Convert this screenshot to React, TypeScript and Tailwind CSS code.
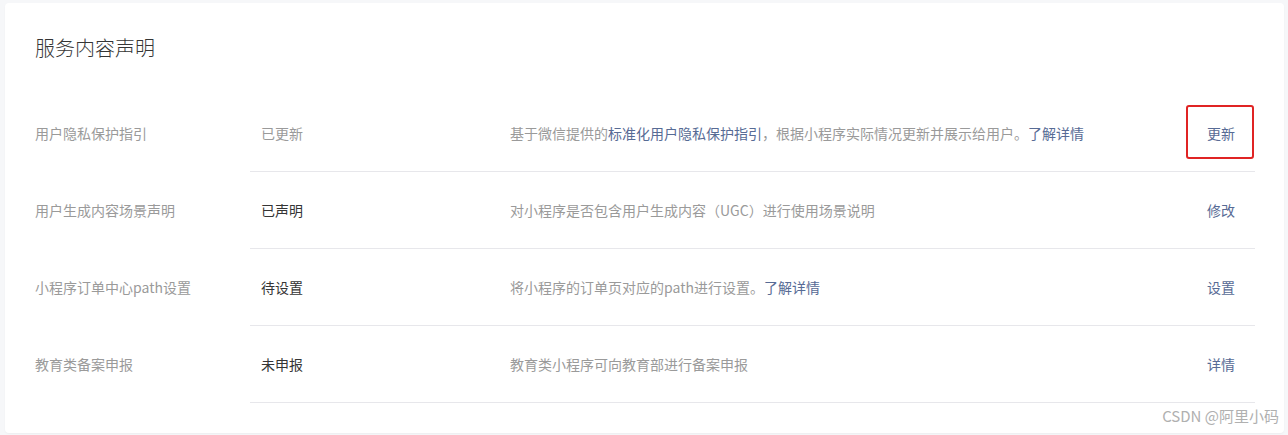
const font = { fontFamily: '"Noto Sans CJK SC", "Noto Sans", sans-serif' };

type Row = {
  label: string;
  status: string;
  muted?: boolean;
  desc: React.ReactNode;
  action: string;
  boxed?: boolean;
};

const rows: Row[] = [
  {
    label: "用户隐私保护指引",
    status: "已更新",
    muted: true,
    desc: (
      <>
        基于微信提供的<span className="text-[#576b95]">标准化用户隐私保护指引</span>
        ，根据小程序实际情况更新并展示给用户。
        <span className="text-[#576b95]">了解详情</span>
      </>
    ),
    action: "更新",
    boxed: true,
  },
  {
    label: "用户生成内容场景声明",
    status: "已声明",
    desc: "对小程序是否包含用户生成内容（UGC）进行使用场景说明",
    action: "修改",
  },
  {
    label: "小程序订单中心path设置",
    status: "待设置",
    desc: (
      <>
        将小程序的订单页对应的path进行设置。
        <span className="text-[#576b95]">了解详情</span>
      </>
    ),
    action: "设置",
  },
  {
    label: "教育类备案申报",
    status: "未申报",
    desc: "教育类小程序可向教育部进行备案申报",
    action: "详情",
  },
];

export default function App() {
  return (
    <div className="h-screen bg-[#f6f7f9] pl-[5px] pt-[3px] pr-[4px]" style={font}>
      <div className="relative h-[430px] rounded-[4px] bg-white pl-[30px] pr-[29px] shadow-[0_1px_2px_rgba(0,0,0,0.04)]">
        <div className="flex h-[92px] items-center pb-[2px] text-[20px] font-light text-[#353535]">
          服务内容声明
        </div>
        {rows.map((r) => (
          <div key={r.label} className="flex h-[77px] text-[14px]">
            <div className="flex w-[215px] items-center text-[#9a9a9a]">{r.label}</div>
            <div className="flex flex-1 items-center border-b border-[#e7e7eb]">
              <div
                className={`w-[260px] pl-[11px] ${r.muted ? "text-[#9a9a9a]" : "text-[#353535]"}`}
              >
                {r.status}
              </div>
              <div className="flex-1 text-[#9a9a9a]">{r.desc}</div>
              <div className="relative mr-[20px] text-[#576b95]">
                {r.action}
                {r.boxed && (
                  <div className="absolute left-[-21px] top-[-18px] h-[54px] w-[68px] rounded-[3px] border-2 border-[#e02424]" />
                )}
              </div>
            </div>
          </div>
        ))}
        <div className="absolute bottom-[6px] right-[5px] text-[15px] text-[#b0b0b0]">
          CSDN @阿里小码
        </div>
      </div>
    </div>
  );
}
